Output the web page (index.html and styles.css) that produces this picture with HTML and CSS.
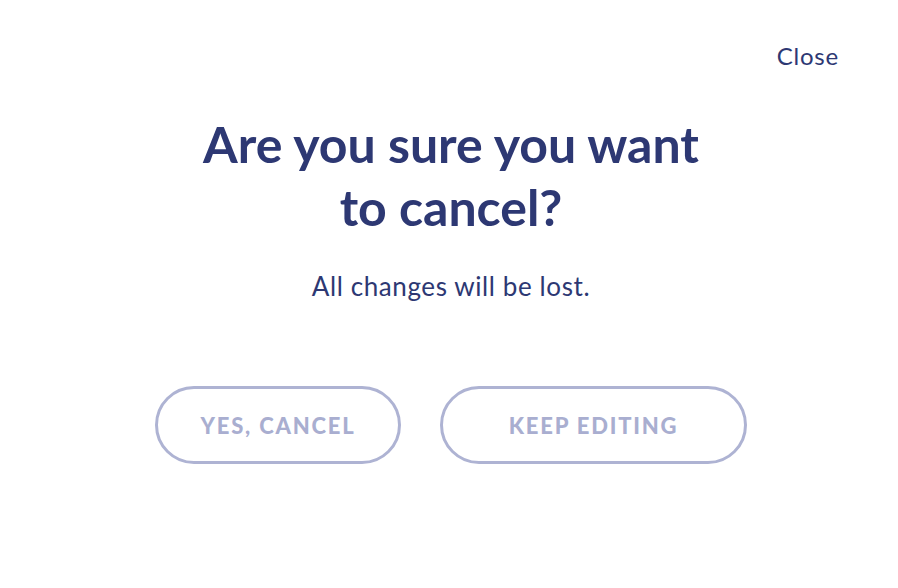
FILE: index.html
```html
<!DOCTYPE html>
<html lang="en">
<head>
    <meta charset="UTF-8">
    <meta name="viewport" content="width=device-width, initial-scale=1.0">
    <title>Cancel changes</title>
    <link rel="stylesheet" href="styles.css">
</head>
<body>
    <div class="modal">
        <div class="modal-top">
            <a class="close-link" href="#">Close</a>
        </div>
        <div class="modal-body">
            <h1>Are you sure you want<br>to cancel?</h1>
            <p class="subtitle">All changes will be lost.</p>
        </div>
        <div class="actions">
            <button class="btn btn-yes">Yes, cancel</button>
            <button class="btn btn-keep">Keep editing</button>
        </div>
    </div>
</body>
</html>
```

FILE: styles.css
```css
body {
    margin: 0;
    padding: 0;
    background: #ffffff;
    font-family: 'Lato', 'Open Sans', sans-serif;
    color: #2d3873;
}
.modal {
    width: 898px;
    height: 588px;
    box-sizing: border-box;
    padding: 42px 59px 0 59px;
    display: flex;
    flex-direction: column;
    align-items: center;
}
.modal-top {
    align-self: stretch;
    display: flex;
    justify-content: flex-end;
}
.close-link {
    color: #2d3873;
    text-decoration: none;
    font-size: 24px;
    letter-spacing: 0.8px;
    line-height: 28px;
}
.modal-body {
    text-align: center;
    margin-top: 43px;
    padding-left: 4px;
}
h1 {
    margin: 0;
    font-size: 50px;
    line-height: 63px;
    font-weight: 700;
    color: #2d3873;
}
.subtitle {
    margin: 32px 0 0 0;
    font-size: 26px;
    letter-spacing: 0.6px;
    line-height: 30px;
}
.actions {
    display: flex;
    gap: 39px;
    margin-top: 85px;
    padding-left: 4px;
}
.btn {
    height: 78px;
    border: 3px solid #aeb3d3;
    border-radius: 40px;
    background: #ffffff;
    color: #a9aed0;
    font-family: 'Lato', 'Open Sans', sans-serif;
    font-weight: 900;
    font-size: 22px;
    letter-spacing: 1.8px;
    text-transform: uppercase;
    cursor: pointer;
}
.btn-yes {
    width: 246px;
}
.btn-keep {
    width: 307px;
}
```
